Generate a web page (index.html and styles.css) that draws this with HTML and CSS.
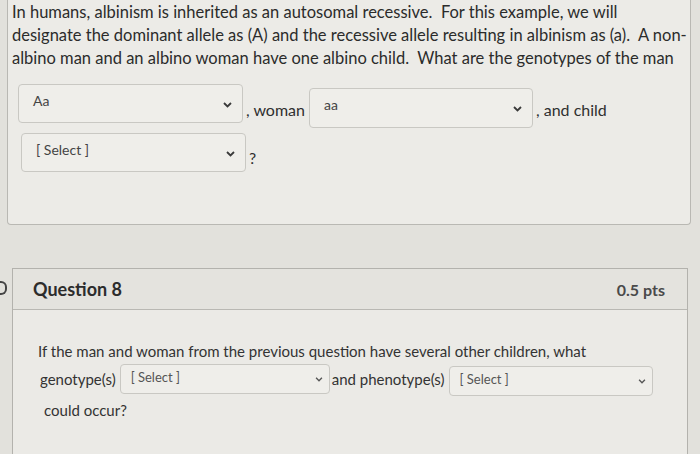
FILE: index.html
```html
<!DOCTYPE html>
<html lang="en">
<head>
  <meta charset="UTF-8">
  <title>Quiz</title>
  <link rel="stylesheet" href="styles.css">
</head>
<body>

  <div class="page">
    <!-- previous question (top clipped) -->
    <div class="card first">
      <div class="text">
        In humans, albinism is inherited as an autosomal recessive.&nbsp; For this example, we will<br>
        designate the dominant allele as (A) and the recessive allele resulting in albinism as (a).&nbsp; A non-<br>
        albino man and an albino woman have one albino child.&nbsp; What are the genotypes of the man
      </div>
      <div class="row">
        <div class="select big">
          <span class="value">Aa</span>
          <svg class="chev" width="9" height="6" viewBox="0 0 9 6"><path d="M1 1l3.5 3.5L8 1" fill="none" stroke="#3a3a3a" stroke-width="1.8"/></svg>
        </div>
        <span class="word">, woman</span>
        <div class="select big shift">
          <span class="value">aa</span>
          <svg class="chev" width="9" height="6" viewBox="0 0 9 6"><path d="M1 1l3.5 3.5L8 1" fill="none" stroke="#3a3a3a" stroke-width="1.8"/></svg>
        </div>
        <span class="word">, and child</span>
      </div>
      <div class="row second">
        <div class="select big">
          <span class="value">[ Select ]</span>
          <svg class="chev" width="9" height="6" viewBox="0 0 9 6"><path d="M1 1l3.5 3.5L8 1" fill="none" stroke="#3a3a3a" stroke-width="1.8"/></svg>
        </div>
        <span class="word">?</span>
      </div>
    </div>

    <div class="question">
      <span class="marker"></span>
      <div class="header">
        <span class="title">Question 8</span>
        <span class="pts">0.5 pts</span>
      </div>
      <div class="body">
        <div class="line">If the man and woman from the previous question have several other children, what</div>
        <div class="line inline">
          <span>genotype(s)</span>
          <div class="select small">
            <span class="value">[ Select ]</span>
            <svg class="chev" width="8" height="5" viewBox="0 0 9 6"><path d="M1 1l3.5 3.5L8 1" fill="none" stroke="#555" stroke-width="1.6"/></svg>
          </div>
          <span>and phenotype(s)</span>
          <div class="select small wide">
            <span class="value">[ Select ]</span>
            <svg class="chev" width="8" height="5" viewBox="0 0 9 6"><path d="M1 1l3.5 3.5L8 1" fill="none" stroke="#555" stroke-width="1.6"/></svg>
          </div>
        </div>
        <div class="line last">could occur?</div>
      </div>
    </div>
  </div>

</body>
</html>
```

FILE: styles.css
```css
body {
  margin: 0;
  padding: 0;
  background-color: #e2e1dc;
  font-family: Lato, "Open Sans", sans-serif;
  color: #2f2f2f;
  overflow: hidden;
}

.page {
  width: 700px;
  height: 454px;
}

.card {
  background-color: #ecebe7;
  border: 1px solid #b9b8b3;
}

.first {
  margin-left: 7px;
  width: 684px;
  height: 225px;
  border-top: none;
  border-radius: 0 0 4px 4px;
  box-sizing: border-box;
  padding: 1px 0 0 4px;
}

.text {
  font-size: 16.5px;
  line-height: 23px;
  white-space: nowrap;
  color: #2b2b2b;
}

.row {
  display: flex;
  align-items: flex-start;
  margin-top: 14px;
  margin-left: 6px;
}

.row.second {
  margin-top: 5px;
  margin-left: 9px;
}

.select {
  display: flex;
  justify-content: space-between;
  background-color: #efeeea;
  border: 1px solid #c9c8c3;
  border-radius: 4px;
  box-sizing: border-box;
}

.select.big {
  width: 225px;
  height: 39px;
  padding: 7px 10px 0 14px;
  font-size: 14px;
  color: #444;
}

.select.big .chev {
  margin-top: 10px;
}

.select.shift {
  margin-top: 4px;
  width: 224px;
  height: 40px;
}

.word {
  font-size: 16px;
  margin: 16px 4px 0 3px;
}

.row.second .word {
  margin-top: 15px;
}

.question {
  position: relative;
  margin: 43px 0 0 12px;
  width: 676px;
  height: 200px;
  background-color: #ebeae6;
  border: 1px solid #b3b2ad;
  box-sizing: border-box;
}

.marker {
  position: absolute;
  left: -14px;
  top: 12px;
  width: 6px;
  height: 10px;
  border: 2px solid #444;
  border-left: none;
  border-radius: 0 6px 6px 0;
}

.header {
  display: flex;
  justify-content: space-between;
  align-items: center;
  height: 40px;
  padding: 0 22px 0 20px;
  background-color: #e4e3de;
  border-bottom: 1px solid #b9b8b3;
}

.title {
  font-size: 18px;
  font-weight: bold;
  color: #2c2c2c;
}

.pts {
  font-size: 16px;
  font-weight: bold;
  color: #4a4a4a;
}

.body {
  padding: 32px 0 0 25px;
  font-size: 15px;
  color: #333;
}

.line {
  line-height: 19px;
  white-space: nowrap;
}

.line.inline {
  display: flex;
  align-items: center;
  margin-top: 1px;
  margin-left: 2px;
}

.select.small {
  width: 210px;
  height: 30px;
  margin: 0 2px 0 4px;
  padding: 3px 6px 0 10px;
  font-size: 13px;
  color: #555;
}

.select.small .chev {
  margin-top: 9px;
}

.select.small.wide {
  width: 204px;
  margin-top: 4px;
}

.line.last {
  margin: 5px 0 0 6px;
}
```
